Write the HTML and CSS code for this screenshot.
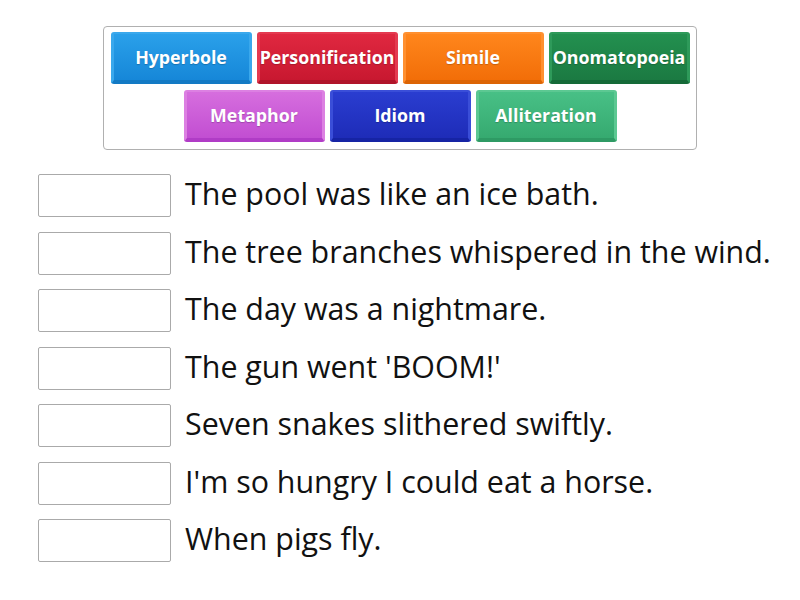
FILE: index.html
```html
<!DOCTYPE html>
<html>
<head>
<meta charset="utf-8">
<link rel="stylesheet" href="styles.css">
</head>
<body>
<div class="page">
  <div class="bank">
    <div class="row">
      <div class="tile blue">Hyperbole</div>
      <div class="tile red">Personification</div>
      <div class="tile orange">Simile</div>
      <div class="tile green">Onomatopoeia</div>
    </div>
    <div class="row">
      <div class="tile purple">Metaphor</div>
      <div class="tile navy">Idiom</div>
      <div class="tile teal">Alliteration</div>
    </div>
  </div>
  <div class="list">
    <div class="item"><div class="slot"></div><div class="text">The pool was like an ice bath.</div></div>
    <div class="item"><div class="slot"></div><div class="text">The tree branches whispered in the wind.</div></div>
    <div class="item"><div class="slot"></div><div class="text">The day was a nightmare.</div></div>
    <div class="item"><div class="slot"></div><div class="text">The gun went 'BOOM!'</div></div>
    <div class="item"><div class="slot"></div><div class="text">Seven snakes slithered swiftly.</div></div>
    <div class="item"><div class="slot"></div><div class="text">I'm so hungry I could eat a horse.</div></div>
    <div class="item"><div class="slot"></div><div class="text">When pigs fly.</div></div>
  </div>
</div>
</body>
</html>
```
FILE: styles.css
```css
html, body {
  margin: 0;
  padding: 0;
  background: #ffffff;
}
body {
  font-family: "Open Sans", "Noto Sans", sans-serif;
  color: #111111;
}
.page {
  padding-top: 26px;
}
.bank {
  width: 592px;
  margin-left: 103px;
  border: 1px solid #b0b0b0;
  border-radius: 4px;
  padding: 5px 0 7px 0;
  display: flex;
  flex-direction: column;
  gap: 6px;
}
.row {
  display: flex;
  justify-content: center;
  gap: 5px;
}
.tile {
  box-sizing: border-box;
  width: 141px;
  height: 52px;
  border-radius: 3px;
  display: flex;
  align-items: center;
  justify-content: center;
  color: #ffffff;
  font-weight: 700;
  font-size: 17.8px;
  letter-spacing: 0;
  border: 3px solid transparent;
  border-top-width: 2px;
  border-bottom-width: 4px;
  text-shadow: 0 1px 1px rgba(0,0,0,0.2);
  white-space: nowrap;
}
.blue { background-image: linear-gradient(#2aa0ea, #1687d8); border-color: #3aa8ec #3aa8ec #137ac4; }
.red { background-image: linear-gradient(#e02840, #c81830); border-color: #e43a50 #e43a50 #b0142a; }
.orange { background-image: linear-gradient(#ff861c, #f26e08); border-color: #ff9030 #ff9030 #dc6404; }
.green { background-image: linear-gradient(#23904f, #1b7a42); border-color: #2e9a5a #2e9a5a #156a38; }
.purple { background-image: linear-gradient(#d66ede, #c24ed2); border-color: #dc80e2 #dc80e2 #b03cc6; }
.navy { background-image: linear-gradient(#2a3dd0, #1e2cb8); border-color: #3a4ed8 #3a4ed8 #1624a4; }
.teal { background-image: linear-gradient(#48c086, #36aa70); border-color: #5cc892 #5cc892 #2e9a64; }
.list {
  margin-top: 24px;
  margin-left: 38px;
  display: flex;
  flex-direction: column;
  gap: 14.5px;
}
.item {
  display: flex;
  align-items: center;
  gap: 14px;
  height: 43px;
}
.slot {
  box-sizing: border-box;
  width: 133px;
  height: 43px;
  border: 1px solid #aaaaaa;
  border-radius: 2px;
  background: #ffffff;
  flex: none;
}
.text {
  font-size: 30.4px;
  line-height: 40px;
  margin-top: -3px;
  color: #111111;
  white-space: nowrap;
}
```
